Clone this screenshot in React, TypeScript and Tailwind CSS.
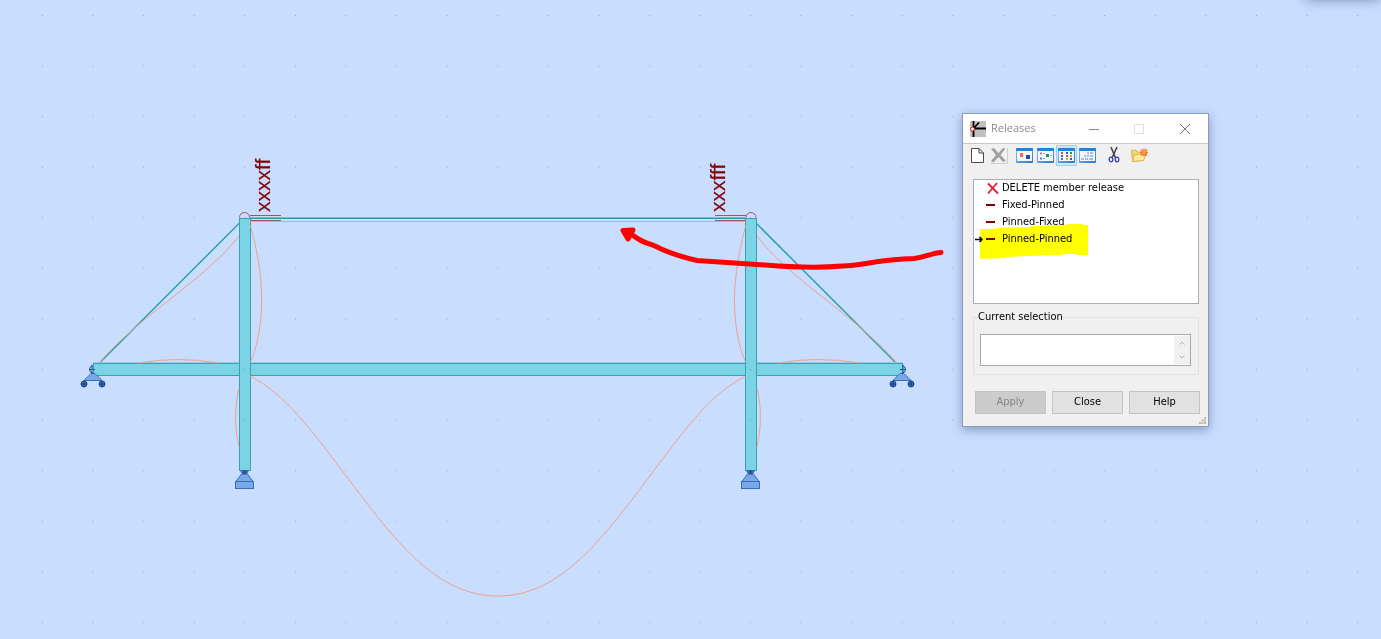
import React, { useState } from 'react';

const GRID = 50.58;

interface ToolButtonProps {
  label: string;
  className?: string;
  active?: boolean;
  children: React.ReactNode;
}

const ToolButton: React.FC<ToolButtonProps> = ({ label, className, active, children }) => (
  <button
    type="button"
    aria-label={label}
    className={`flex h-[21px] w-[21px] items-center justify-center border ${active ? 'border-[#99d1ff] bg-[#cce8ff]' : 'border-transparent'} ${className ?? ''}`}
  >
    {children}
  </button>
);

const ViewIcon: React.FC<{ children: React.ReactNode }> = ({ children }) => (
  <svg width="17" height="15" viewBox="0 0 17 15" className="shrink-0">
    <defs>
      <linearGradient id="viewFrame" x1="0" y1="0" x2="1" y2="1">
        <stop offset="0" stopColor="#8fc1f2" />
        <stop offset="1" stopColor="#2b78cc" />
      </linearGradient>
    </defs>
    <rect x="0" y="0" width="17" height="15" rx="1" fill="url(#viewFrame)" />
    <rect x="0" y="0" width="17" height="3" rx="1" fill="#2382e0" />
    <rect x="1" y="3" width="15" height="10" fill="#f3f7fc" />
    {children}
  </svg>
);

const PinnedSupport: React.FC<{ x: number; y: number }> = ({ x, y }) => (
  <g transform={`translate(${x} ${y})`} stroke="#3a6db5" fill="#78a9e6">
    <path d="M-3 4 L3 4 L8.5 11.5 L-8.5 11.5 Z" />
    <rect x="-9" y="11.5" width="18" height="7" />
    <path d="M-4 .5 H4 L2 4 H-2 Z" fill="#2f69b3" />
    <path d="M0 0 V4" stroke="#123f80" />
  </g>
);

const RollerSupport: React.FC<{ x: number; y: number }> = ({ x, y }) => (
  <g transform={`translate(${x} ${y})`} stroke="#3a6db5">
    <path d="M-2 4 L2 4 L9 11 H-9 Z" fill="#78a9e6" />
    {[-9, 9].map((cx) => (
      <g key={cx}>
        <circle cx={cx} cy="14.5" r="3" fill="#3c75bd" stroke="#174b8e" />
        <path d={`M${cx - 3} 14.5 h6 M${cx} 11.5 v6`} stroke="#123f80" />
      </g>
    ))}
  </g>
);

const StructureView: React.FC = () => (
  <svg className="absolute inset-0 h-full w-full" role="img" aria-label="Frame deformation view">
    <defs>
      <pattern id="grid" x="42" y="15" width={GRID} height={GRID} patternUnits="userSpaceOnUse">
        <rect width="1" height="1" fill="#8f9fe8" />
      </pattern>
    </defs>
    <rect width="100%" height="100%" fill="url(#grid)" />

    {/* members */}
    <g stroke="#37a3ae" fill="#7bd4e6">
      <rect x="93.5" y="363.5" width="809" height="12" />
      <path d="M239.5 223 L99.5 363 M756 223 L896 363" fill="none" strokeWidth="1.6" />
      <rect x="239.5" y="218.5" width="11" height="252" />
      <rect x="745.5" y="218.5" width="11" height="252" />
    </g>
    <path d="M250 217.5 H746" stroke="#64c4d6" />
    <path d="M250 218.5 H746" stroke="#2b98a5" />
    <path d="M93 362.5 H239 M251 362.5 H745 M757 362.5 H903" stroke="#9fc4e6" />

    {/* deformed shape */}
    <g fill="none" stroke="#efa18a">
      <path d="M250 221.5 H746" />
      <path d="M250 376 C285 394 310 428 350 481 C400 548 440 596 498 596 C556 596 596 548 646 481 C686 428 710 394 746 376" />
      <path d="M250.5 226 C260 260 262 285 261.5 305 C261 330 256 350 250.5 362" />
      <path d="M745.5 226 C737 260 734 285 734.5 305 C735 330 740 350 745.5 362" />
      <path d="M239 388 C234.5 405 234.5 428 239 447" />
      <path d="M757 388 C761.5 405 761.5 428 757 447" />
      <path d="M138 363 Q180 356 218 363" />
      <path d="M778 363 Q818 356 860 363" />
      <path d="M239 236 C205 280 140 315 99 363" />
      <path d="M757 236 C790 280 855 315 897 363" />
    </g>

    {/* member releases */}
    <g fill="none" stroke="#a3526f">
      <path d="M250 215.5 H281 M250 220.5 H281" />
      <path d="M715 215.5 H746 M715 220.5 H746" />
      <path d="M239.5 217.5 a5 5 0 0 1 10 0" />
      <path d="M746 217.5 a5 5 0 0 1 10 0" />
    </g>
    <g fill="#850009" stroke="#850009" strokeWidth="0.2" fontFamily="'Liberation Sans', Arial, sans-serif" fontSize="21">
      <text transform="translate(270 212) rotate(-90)">xxxxff</text>
      <text transform="translate(725 212) rotate(-90)">xxxfff</text>
    </g>

    <PinnedSupport x={244.5} y={470} />
    <PinnedSupport x={750.5} y={470} />
    <RollerSupport x={93} y={369.5} />
    <RollerSupport x={902} y={369.5} />
    <g fill="none" stroke="#1c5294">
      <path d="M93 366 a3.5 3.5 0 0 0 0 7 M92 364.5 V374 M89 369.5 H95" />
      <path d="M902 366 a3.5 3.5 0 0 1 0 7 M903 364.5 V374 M900 369.5 H906" />
    </g>

    <g fill="#4f8fe0">
      <rect x="244" y="369" width="1" height="1" />
      <rect x="244" y="420" width="1" height="1" />
      <rect x="750" y="369" width="1" height="1" />
      <rect x="750" y="420" width="1" height="1" />
    </g>

    {/* hand drawn arrow */}
    <g stroke="#ff0000" strokeWidth="5" strokeLinecap="round" strokeLinejoin="round">
      <path
        d="M941 252.5 C932 253 926 257 914 258.5 C900 259 888 260 875 262 C862 264 856 266 842 266 C820 268 790 267 765 265 L697 260.5 C682 257 668 253 655 246 C647 243 641 242 634 236"
        fill="none"
      />
      <path d="M623 230.5 L633 230 L628 239 Z" fill="#ff0000" />
    </g>
  </svg>
);

const releases = ['DELETE member release', 'Fixed-Pinned', 'Pinned-Fixed', 'Pinned-Pinned'];

const ReleaseList: React.FC = () => {
  const [current, setCurrent] = useState(3);

  return (
    <div className="relative mr-px h-[125px] border border-[#a9adb5] bg-white">
      <ul>
        {releases.map((name, i) => (
          <li key={name}>
            <button type="button" onClick={() => setCurrent(i)} className="flex h-[17px] items-center whitespace-nowrap">
              <svg width="28" height="13" viewBox="0 0 28 13" className="shrink-0">
                {i === current && <path d="M1 6.5 H8 M5.5 4 L8 6.5 L5.5 9" stroke="#000" strokeWidth="1.5" fill="none" />}
                {i === 0 ? (
                  <path d="M14 1.5 L24 11.5 M23 1 L14 11.5" stroke="#e8192c" strokeWidth="1.8" fill="none" />
                ) : (
                  <rect x="12" y="5" width="9" height="2" fill="#800000" />
                )}
              </svg>
              {name}
            </button>
          </li>
        ))}
      </ul>
      <svg className="pointer-events-none absolute left-1.5 top-11 mix-blend-multiply" width="108" height="36" viewBox="0 0 108 36">
        <path d="M0 5 L15 5 V4 L50 3 V2 L85 1 L88 0 H103 V1 H108 V31 H96 V30 H85 L80 31 L48 32 L27 33 L26 34 L0 35 Z" fill="#ffff00" />
      </svg>
    </div>
  );
};

const Toolbar: React.FC = () => (
  <div className="flex h-[22px] items-center pl-1">
    <ToolButton label="New release">
      <svg width="13" height="15" viewBox="0 0 13 15">
        <path d="M.5 .5 H8 L12.5 5 V14.5 H.5 Z M8 .5 V5 H12.5" fill="#fff" stroke="#4b4b4b" />
      </svg>
    </ToolButton>
    <ToolButton label="Delete release">
      <svg width="18" height="17" viewBox="0 0 18 17" className="shrink-0">
        <path d="M1 16.5 H17.5 V1" fill="none" stroke="#cfcfcf" />
        <path d="M1 2 L4 1 L8.5 6 L13 1 L15.5 1.5 L10.5 8 L16 14 L13 15 L8.5 10 L3.5 15.5 L1 14 L6 8 Z" fill="#a0a0a0" />
      </svg>
    </ToolButton>
    <ToolButton label="Large icons" className="ml-[5px]">
      <ViewIcon>
        <rect x="4" y="5" width="3" height="4" fill="#ef6a4e" />
        <rect x="10" y="7" width="4" height="4" fill="#174fae" />
      </ViewIcon>
    </ToolButton>
    <ToolButton label="Small icons">
      <ViewIcon>
        <path d="M3 5.5 h2" stroke="#d77862" strokeWidth="2" />
        <path d="M3 10.5 h2" stroke="#3a78d4" strokeWidth="2" />
        <path d="M9 7.5 h3" stroke="#179b3f" strokeWidth="3" />
        <path d="M6 5.5 h2 M6 10.5 h2 M13 7.5 h2" stroke="#8ea3bd" />
      </ViewIcon>
    </ToolButton>
    <ToolButton label="List" active>
      <ViewIcon>
        <path d="M3 5 h2 M8 8 h2" stroke="#d6544b" strokeWidth="2" />
        <path d="M8 5 h2 M3 8 h2 M12 11 h2" stroke="#2362c4" strokeWidth="2" />
        <path d="M12 5 h2 M3 11 h2" stroke="#27964b" strokeWidth="2" />
        <path d="M12 8 h2 M8 11 h2" stroke="#d5a326" strokeWidth="2" />
      </ViewIcon>
    </ToolButton>
    <ToolButton label="Details">
      <ViewIcon>
        <path d="M2 11 h3 M6 11 h3 M10 11 h4 M5 8 h2 M8 8 h2 M11 8 h3 M8 5 h2 M11 5 h3" stroke="#a9bfd9" strokeWidth="2" />
      </ViewIcon>
    </ToolButton>
    <ToolButton label="Cut" className="ml-[5px]">
      <svg width="12" height="16" viewBox="0 0 12 16" fill="none">
        <path d="M3 0 L7.500 11 M9 0 L4.500 10" stroke="#3c3f4a" strokeWidth="1.5" />
        <ellipse cx="3" cy="12.5" rx="1.8" ry="2.300" stroke="#3f3fa5" strokeWidth="1.300" />
        <ellipse cx="9" cy="12.5" rx="1.8" ry="2.300" stroke="#3f3fa5" strokeWidth="1.300" />
      </svg>
    </ToolButton>
    <ToolButton label="Open library" className="ml-[5px]">
      <svg width="17" height="15" viewBox="0 0 17 15" className="shrink-0">
        <path d="M.5 2.5 L5 2 L6.5 4 H12.5 V12 L1.5 13.5 Z" fill="#f5d66c" stroke="#dfb250" />
        <path d="M3.5 6.5 L15.5 5.5 L12.5 12.5 L1.5 13.5 Z" fill="#ffeb9c" stroke="#dfb250" />
        <path d="M13 .5 V8.5 M9 4.5 H17 M10 1.5 L16 7.5 M16 1.5 L10 7.5" stroke="#f0672f" strokeWidth="1.3" />
        <circle cx="13" cy="4.5" r="2" fill="#f8a13c" />
      </svg>
    </ToolButton>
  </div>
);

const ReleasesDialog: React.FC = () => (
  <section
    aria-label="Releases"
    className="absolute left-[962px] top-[113px] w-[247px] border border-[#8d9cb5] bg-[#f0f0f0] shadow-[0_3px_10px_rgba(50,70,120,0.45)]"
  >
    <header className="flex h-[30px] items-center border-b border-[#c8c8c8] bg-white pl-[7px]">
      <svg width="16" height="16" viewBox="0 0 16 16">
        <rect width="16" height="16" fill="#c0c0c0" />
        <path d="M3.5 0 V16 M4 7.500 H16 M4 7 L9 1.500" stroke="#000" strokeWidth="1.8" fill="none" />
        <circle cx="2.5" cy="8" r="2" fill="#fff" stroke="#e01010" />
      </svg>
      <h1 className="flex-1 pl-[5px] font-['Open_Sans',sans-serif] text-[11px] text-[#8a8a8a]">Releases</h1>
      <button type="button" aria-label="Minimize" className="flex h-7 w-[45px] items-center justify-center">
        <svg width="10" height="10" viewBox="0 0 10 10">
          <path d="M0 5.5 H10" stroke="#888" />
        </svg>
      </button>
      <button type="button" aria-label="Maximize" disabled className="flex h-7 w-[45px] items-center justify-center">
        <svg width="10" height="10" viewBox="0 0 10 10">
          <rect x=".5" y=".5" width="9" height="9" fill="none" stroke="#e0e0e0" />
        </svg>
      </button>
      <button type="button" aria-label="Close window" className="flex h-7 w-[47px] items-center justify-center">
        <svg width="10" height="10" viewBox="0 0 10 10">
          <path d="M0 0 L10 10 M10 0 L0 10" stroke="#777" />
        </svg>
      </button>
    </header>

    <Toolbar />

    <div className="pb-3 pl-2.5 pr-2 pt-[13px] font-['DejaVu_Sans_Condensed','DejaVu_Sans',sans-serif] text-[11px] text-black [font-stretch:condensed]">
      <ReleaseList />

      <fieldset className="mr-px mt-1 border border-[#e0e0e0] pb-2 pl-1.5 pr-[7px]">
        <legend className="-ml-0.5 h-[18px] leading-[18px]">
          <label htmlFor="selection">Current selection</label>
        </legend>
        <div className="mt-2 flex h-8 border border-[#a8a8a8] bg-white">
          <textarea id="selection" className="min-w-0 flex-1 resize-none outline-none" />
          <div className="my-px flex w-4 flex-col bg-[#f0f0f0]">
            <button type="button" aria-label="Scroll up" className="flex flex-1 items-center justify-center">
              <svg width="6" height="4" viewBox="0 0 6 4">
                <path d="M.5 3.5 L3 1 L5.5 3.5" fill="none" stroke="#b0b0b0" />
              </svg>
            </button>
            <button type="button" aria-label="Scroll down" className="flex flex-1 items-center justify-center">
              <svg width="6" height="4" viewBox="0 0 6 4">
                <path d="M.5 .5 L3 3 L5.5 .5" fill="none" stroke="#b0b0b0" />
              </svg>
            </button>
          </div>
        </div>
      </fieldset>

      <div className="mt-4 grid grid-cols-3 gap-1.5 pl-0.5">
        <button type="button" disabled className="h-[23px] border border-[#c3c3c3] bg-[#cccccc] text-[#838383]">
          Apply
        </button>
        <button type="button" className="h-[23px] border border-[#c3c3c3] bg-[#e1e1e1]">
          Close
        </button>
        <button type="button" className="h-[23px] border border-[#c3c3c3] bg-[#e1e1e1]">
          Help
        </button>
      </div>
    </div>

    <svg className="absolute bottom-0.5 right-0.5" width="7" height="7" viewBox="0 0 7 7" fill="#bcbcbc">
      <path d="M5 0 h2 v2 h-2 Z M2.5 2.5 h2 v2 h-2 Z M5 2.5 h2 v2 h-2 Z M0 5 h2 v2 h-2 Z M2.5 5 h2 v2 h-2 Z M5 5 h2 v2 h-2 Z" />
    </svg>
  </section>
);

export default function App() {
  return (
    <main className="relative min-h-screen w-full overflow-hidden bg-[#c9deff]">
      <StructureView />
      <div className="absolute -top-10 right-0 h-10 w-[76px] shadow-[0_0_12px_rgba(60,80,120,0.55)]" />
      <ReleasesDialog />
    </main>
  );
}
